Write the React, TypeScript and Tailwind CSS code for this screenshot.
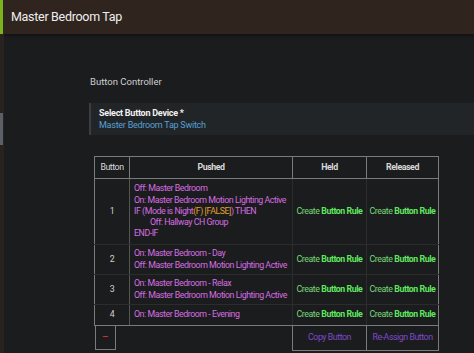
import React from "react";

const pink = "text-[#d66ee0]";

function CreateRule() {
  return (
    <span className="whitespace-nowrap text-[#78d878]">
      Create <span className="font-bold text-[#5fe85f]">Button Rule</span>
    </span>
  );
}

export default function App() {
  const rows = [
    {
      n: 1,
      h: "h-[66px]",
      lines: (
        <>
          <div>Off: Master Bedroom</div>
          <div>On: Master Bedroom Motion Lighting Active</div>
          <div>
            IF (Mode is Night<span className="text-[#e0a030]">(F) [FALSE]</span>) THEN
          </div>
          <div className="pl-[16px]">Off: Hallway CH Group</div>
          <div>END-IF</div>
        </>
      ),
    },
    {
      n: 2,
      h: "h-[30px]",
      lines: (
        <>
          <div>On: Master Bedroom - Day</div>
          <div>Off: Master Bedroom Motion Lighting Active</div>
        </>
      ),
    },
    {
      n: 3,
      h: "h-[30px]",
      lines: (
        <>
          <div>On: Master Bedroom - Relax</div>
          <div>Off: Master Bedroom Motion Lighting Active</div>
        </>
      ),
    },
    {
      n: 4,
      h: "h-[21px]",
      lines: <div>On: Master Bedroom - Evening</div>,
    },
  ];

  return (
    <div className="flex h-[353px] w-[474px] flex-col overflow-hidden bg-[#1b1c1e] font-['Roboto',sans-serif]">
      {/* Header bar */}
      <div className="flex h-[34px] shrink-0 items-center border-l-[3px] border-[#7bb31a] bg-[#30241f] pl-[8px] text-[12.5px] tracking-[-0.3px] text-[#eeeeee] shadow-[0_2px_3px_rgba(0,0,0,0.35)]">
        Master Bedroom Tap
      </div>

      <div className="flex flex-1">
        {/* Left strip with scroll thumb */}
        <div className="flex w-[4px] flex-col bg-[#29231f]">
          <div className="mt-[79px] h-[32px] w-[3px] bg-[#596066]" />
        </div>

        <div className="flex-1 pl-[85px] pt-[41px]">
          <div className="pl-[1px] text-[9.5px] leading-[14px] text-[#cfcfcf]">Button Controller</div>

          {/* Select device */}
          <div className="mt-[14px] flex h-[32px] flex-col justify-center border-l-2 border-[#3a3e42] bg-[#222528] pl-[8px] text-[9px] leading-[12px] tracking-[-0.25px]">
            <div className="font-bold text-[#f2f2f2]">Select Button Device *</div>
            <div className="text-[#55a0d6]">Master Bedroom Tap Switch</div>
          </div>

          {/* Table */}
          <table className="mt-[21px] ml-[5px] w-[344px] table-fixed border-collapse text-[8.8px] leading-[11.3px] tracking-[-0.45px]">
            <colgroup>
              <col className="w-[35px]" />
              <col className="w-[163px]" />
              <col className="w-[74px]" />
              <col className="w-[72px]" />
            </colgroup>
            <thead>
              <tr className="h-[22px] text-[#d8d8d8]">
                <th className="border border-[#7a7a7a] text-center font-normal">Button</th>
                <th className="border border-[#7a7a7a] text-center font-bold">Pushed</th>
                <th className="border border-[#7a7a7a] text-center font-bold">Held</th>
                <th className="border border-[#7a7a7a] text-center font-bold">Released</th>
              </tr>
            </thead>
            <tbody>
              {rows.map((r, i) => {
                const bottom = i < 3 ? "border-b border-b-[#2c2c2c]" : "border-b border-b-[#7a7a7a]";
                return (
                  <tr key={r.n} className={r.h}>
                    <td className={`border-l border-l-[#7a7a7a] border-r border-r-[#555] text-center text-[#cfcfcf] ${bottom}`}>
                      {r.n}
                    </td>
                    <td className={`whitespace-nowrap px-[4px] ${pink} border-r border-r-[#2c2c2c] ${bottom}`}>
                      {r.lines}
                    </td>
                    <td className={`text-center border-r border-r-[#2c2c2c] ${bottom}`}>
                      <CreateRule />
                    </td>
                    <td className={`text-center border-r border-r-[#7a7a7a] ${bottom}`}>
                      <CreateRule />
                    </td>
                  </tr>
                );
              })}
              <tr className="h-[24px]">
                <td className="p-0 align-top">
                  <div className="flex h-[24px] w-[21px] items-center justify-center border border-t-0 border-[#7a7a7a] text-[12px] text-[#e03030]">
                    −
                  </div>
                </td>
                <td />
                <td className="border border-t-0 border-[#7a7a7a] text-center text-[#7e4ac8]">Copy Button</td>
                <td className="whitespace-nowrap border border-t-0 border-[#7a7a7a] text-center text-[#7e4ac8]">
                  Re-Assign Button
                </td>
              </tr>
            </tbody>
          </table>
        </div>
      </div>
    </div>
  );
}
